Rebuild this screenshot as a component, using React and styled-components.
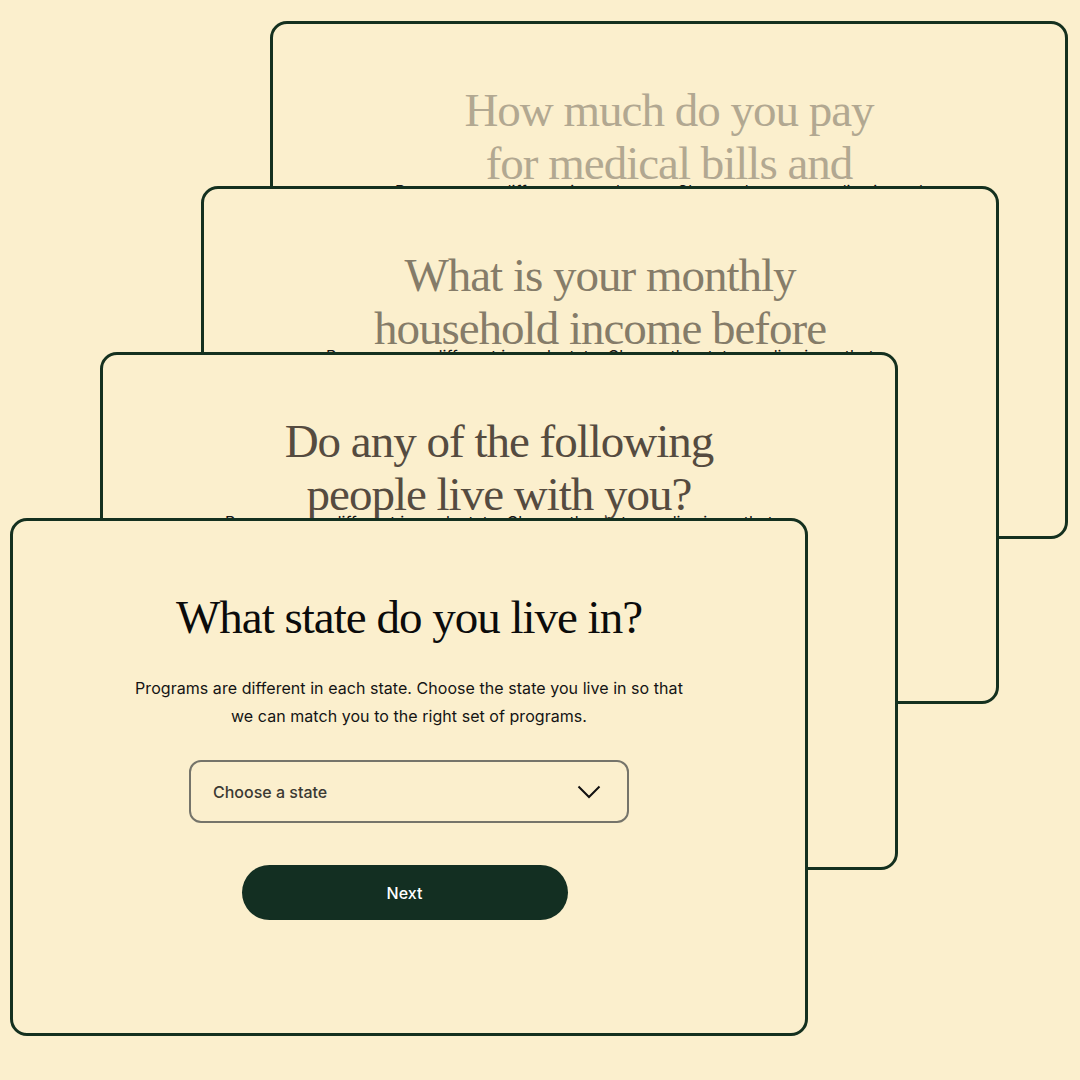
import React from 'react'
import styled, { createGlobalStyle } from 'styled-components'

const GlobalStyle = createGlobalStyle`
  html, body {
    margin: 0;
    padding: 0;
    background: #fbefcd;
  }
`

const Canvas = styled.div`
  position: relative;
  width: 1080px;
  height: 1080px;
  overflow: hidden;
  background: #fbefcd;
`

// cards overlap each other like a fanned stack, so they sit on a free canvas
const Card = styled.div`
  position: absolute;
  left: ${p => p.$x}px;
  top: ${p => p.$y}px;
  width: 798px;
  height: 518px;
  box-sizing: border-box;
  border: 3px solid #14301f;
  border-radius: 17px;
  background: #fbefcd;
  display: flex;
  flex-direction: column;
  align-items: center;
  overflow: hidden;
`

const TitleSlot = styled.div`
  height: 153px;
  box-sizing: border-box;
  padding-top: ${p => p.$pad}px;
  width: 100%;
  display: flex;
  justify-content: center;
`

const Title = styled.h1`
  margin: 0;
  font-family: 'Liberation Serif', 'Times New Roman', serif;
  font-weight: 400;
  font-size: 47px;
  line-height: 53px;
  letter-spacing: -1px;
  text-align: center;
  color: ${p => p.$color};
  white-space: nowrap;
`

const Lead = styled.p`
  margin: 0;
  width: 640px;
  font-family: Inter, 'Noto Sans', sans-serif;
  font-size: 16px;
  line-height: 28px;
  letter-spacing: 0.05px;
  text-align: center;
  color: #141414;
`

const Select = styled.div`
  margin-top: 30px;
  width: 440px;
  height: 63px;
  box-sizing: border-box;
  border: 2px solid #75746a;
  border-radius: 12px;
  display: flex;
  align-items: center;
  justify-content: space-between;
  padding: 0 26px 0 22px;
  font-family: Inter, 'Noto Sans', sans-serif;
  font-size: 16px;
  font-weight: 500;
  color: #3b3a33;
`

const NextButton = styled.button`
  margin-top: 42px;
  margin-right: 9px;
  width: 326px;
  height: 55px;
  border: none;
  border-radius: 28px;
  background: #132f22;
  color: #ffffff;
  font-family: Inter, 'Noto Sans', sans-serif;
  font-size: 16px;
  font-weight: 500;
`

const Chevron = () => (
  <svg width="24" height="14" viewBox="0 0 24 14" fill="none">
    <path d="M1.5 1.5 L12 12 L22.5 1.5" stroke="#111" strokeWidth="2" />
  </svg>
)

const cards = [
  {
    x: 270,
    y: 21,
    pad: 60,
    color: '#b2a891',
    lines: ['How much do you pay', 'for medical bills and'],
  },
  {
    x: 201,
    y: 186,
    pad: 60,
    color: '#857c69',
    lines: ['What is your monthly', 'household income before'],
  },
  {
    x: 100,
    y: 352,
    pad: 60,
    color: '#554b40',
    lines: ['Do any of the following', 'people live with you?'],
  },
  {
    x: 10,
    y: 518,
    pad: 70,
    color: '#0b0b0b',
    lines: ['What state do you live in?'],
    active: true,
  },
]

const QuestionCard = ({ x, y, pad, color, lines, active }) => (
  <Card $x={x} $y={y}>
    <TitleSlot $pad={pad}>
      <Title $color={color}>
        {lines.map((l, i) => (
          <React.Fragment key={i}>
            {i > 0 && <br />}
            {l}
          </React.Fragment>
        ))}
      </Title>
    </TitleSlot>
    <Lead>
      Programs are different in each state. Choose the state you live in so that
      <br />
      we can match you to the right set of programs.
    </Lead>
    {active && (
      <>
        <Select>
          <span>Choose a state</span>
          <Chevron />
        </Select>
        <NextButton>Next</NextButton>
      </>
    )}
  </Card>
)

export default function App() {
  return (
    <Canvas>
      <GlobalStyle />
      {cards.map((c, i) => (
        <QuestionCard key={i} {...c} />
      ))}
    </Canvas>
  )
}
